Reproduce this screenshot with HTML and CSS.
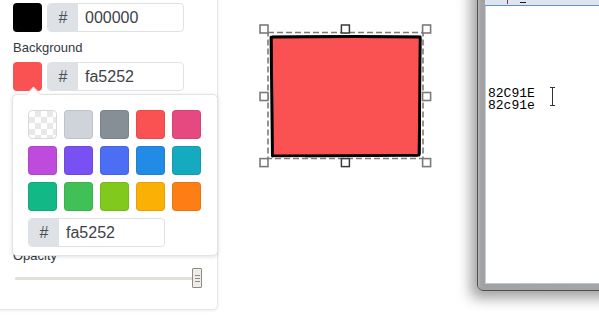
FILE: index.html
```html
<!DOCTYPE html>
<html>
<head>
<meta charset="utf-8">
<link rel="stylesheet" href="styles.css">
</head>
<body>
<aside class="panel">
  <div class="row">
    <span class="swatch sw-black"></span>
    <div class="hex"><span class="hash">#</span><span class="val">000000</span></div>
  </div>
  <div class="label">Background</div>
  <div class="row bg-row">
    <span class="swatch sw-red"></span>
    <div class="hex"><span class="hash">#</span><span class="val">fa5252</span></div>
    <div class="popover">
      <div class="grid">
        <span class="cell c-transparent"></span>
        <span class="cell c-gray1"></span>
        <span class="cell c-gray2"></span>
        <span class="cell c-red"></span>
        <span class="cell c-pink"></span>
        <span class="cell c-grape"></span>
        <span class="cell c-violet"></span>
        <span class="cell c-indigo"></span>
        <span class="cell c-blue"></span>
        <span class="cell c-cyan"></span>
        <span class="cell c-teal"></span>
        <span class="cell c-green"></span>
        <span class="cell c-lime"></span>
        <span class="cell c-yellow"></span>
        <span class="cell c-orange"></span>
      </div>
      <div class="hex pop-hex"><span class="hash">#</span><span class="val">fa5252</span></div>
    </div>
  </div>
  <div class="label opacity">Opacity</div>
  <div class="slider">
    <div class="track"></div>
    <div class="thumb"><i></i><i></i><i></i></div>
  </div>
</aside>

<svg class="canvas" width="190" height="160" viewBox="250 15 190 160" xmlns="http://www.w3.org/2000/svg">
  <path d="M271.5 37 L420 36.8 L419.2 155 L272 156 Z" fill="#fa5252"/>
  <path d="M271 37.2 C320 36.4 370 36.2 420.2 37 C419.6 76 419.8 116 419 155.2 C370 155.8 320 156 272.4 156 C271.8 116 271.6 76 271 37.2 Z" fill="none" stroke="#000" stroke-width="2.8" stroke-linejoin="round"/>
  <path d="M272.2 36.2 C322 35.8 372 36.6 419.2 36.4 M420.8 38 C420.2 80 420.6 120 420.2 154.6 M418 156.2 C370 154.4 322 155.2 273 157 M272.8 155 C273 116 272.4 78 272 38" fill="none" stroke="#000" stroke-width="1.3" opacity="0.85"/>
  <path d="M273 157.6 C285 157.8 295 157.6 305 157.4" fill="none" stroke="#e9e9e9" stroke-width="1"/>
  <rect x="268" y="32.5" width="155" height="126" fill="none" stroke="#7b7b7b" stroke-width="1.6" stroke-dasharray="6 3"/>
  <g fill="#fff" stroke="#7b7b7b" stroke-width="1.6">
    <rect x="260" y="25" width="8" height="8"/>
    <rect x="422.6" y="25" width="8" height="8"/>
    <rect x="260" y="92.5" width="8" height="8"/>
    <rect x="422.6" y="92.5" width="8" height="8"/>
    <rect x="260" y="158.6" width="8" height="8"/>
    <rect x="422.6" y="158.6" width="8" height="8"/>
  </g>
  <g fill="#fff" stroke="#3a3a3a" stroke-width="1.5">
    <rect x="341.4" y="25" width="8" height="8"/>
    <rect x="341.4" y="158.6" width="8" height="8"/>
  </g>
</svg>

<div class="window">
  <div class="menubar">
    <span class="mk mk-a"></span>
    <span class="mk mk-b"></span>
  </div>
  <div class="edit">
    <pre class="text">82C91E
82c91e</pre>
    <svg class="ibeam" width="7" height="19" viewBox="0 0 7 19" xmlns="http://www.w3.org/2000/svg">
      <path d="M1 0.5 H6 M1 18.5 H6 M3.5 0.5 V18.5" stroke="#333" stroke-width="1" fill="none"/>
    </svg>
  </div>
</div>
</body>
</html>
```

FILE: styles.css
```css
html, body {
  margin: 0;
  padding: 0;
  background: #fff;
  overflow: hidden;
  width: 599px;
  height: 321px;
}

body {
  font-family: "Liberation Sans", Arial, sans-serif;
  position: relative;
}

.panel {
  box-sizing: border-box;
  width: 228px;
  height: 330px;
  margin: -20px 0 0 -10px;
  padding: 22px 0 0 22px;
  border: 1px solid #e6e6e6;
  border-radius: 5px;
  background: #fff;
  box-shadow: 0 1px 3px rgba(0, 0, 0, 0.07);
}

.row {
  display: flex;
  gap: 5px;
  height: 29px;
}

.bg-row {
  position: relative;
  margin-top: 6px;
}

.swatch {
  width: 29px;
  height: 29px;
  border-radius: 4px;
  flex: none;
}

.sw-black { background: #000; }
.sw-red { background: #fa5252; }

.hex {
  box-sizing: border-box;
  display: flex;
  width: 137px;
  height: 29px;
  border: 1px solid #dee2e6;
  border-radius: 4px;
  overflow: hidden;
  background: #fff;
  font-size: 16px;
  line-height: 27px;
}

.hash {
  width: 30px;
  flex: none;
  text-align: center;
  background: #dee2e6;
  color: #495057;
}

.val {
  padding-left: 7px;
  color: #3d4248;
}

.label {
  margin-top: 8px;
  font-size: 13px;
  line-height: 16px;
  color: #343a40;
}

.label.opacity {
  margin-top: 157px;
}

.popover {
  position: absolute;
  top: 32px;
  left: -1px;
  box-sizing: border-box;
  width: 206px;
  padding: 15px 15px 8px 15px;
  background: #fff;
  border: 1px solid #e3e3e3;
  border-radius: 5px;
  box-shadow: 0 1px 4px rgba(0, 0, 0, 0.12);
  z-index: 2;
}

.popover::before {
  content: "";
  position: absolute;
  top: -6px;
  left: 15px;
  width: 10px;
  height: 10px;
  background: #fff;
  border-top: 1px solid #e3e3e3;
  border-left: 1px solid #e3e3e3;
  transform: rotate(45deg);
}

.grid {
  display: grid;
  grid-template-columns: repeat(5, 29px);
  gap: 7px;
}

.cell {
  box-sizing: border-box;
  width: 29px;
  height: 29px;
  border-radius: 4px;
  border: 1px solid rgba(0, 0, 0, 0.08);
}

.c-transparent {
  background: repeating-conic-gradient(#e8e8e8 0 25%, #fff 0 50%) 0 0 / 12px 12px;
  border-color: #d9d9d9;
}
.c-gray1 { background: #ced4da; }
.c-gray2 { background: #868e96; }
.c-red { background: #fa5252; }
.c-pink { background: #e64980; }
.c-grape { background: #be4bdb; }
.c-violet { background: #7950f2; }
.c-indigo { background: #4c6ef5; }
.c-blue { background: #228be6; }
.c-cyan { background: #15aabf; }
.c-teal { background: #12b886; }
.c-green { background: #40c057; }
.c-lime { background: #82c91e; }
.c-yellow { background: #fab005; }
.c-orange { background: #fd7e14; }

.pop-hex {
  margin-top: 7px;
}

.slider {
  display: flex;
  align-items: center;
  width: 187px;
  height: 20px;
  margin: 4px 0 0 2px;
}

.track {
  flex: 1;
  height: 3px;
  margin-right: -5px;
  background: #e3dfd9;
  border-radius: 1px;
}

.thumb {
  position: relative;
  flex: none;
  box-sizing: border-box;
  width: 10px;
  height: 20px;
  background: #efece8;
  border: 1px solid #8e8a85;
  border-radius: 1px;
  display: flex;
  flex-direction: column;
  justify-content: center;
  align-items: center;
  gap: 2px;
}

.thumb i {
  display: block;
  width: 5px;
  height: 1px;
  background: #8e8a85;
}

.canvas {
  position: absolute;
  left: 250px;
  top: 15px;
}

.window {
  position: absolute;
  left: 477px;
  top: -20px;
  box-sizing: border-box;
  width: 150px;
  height: 311px;
  border: 1px solid #4f4f4f;
  border-radius: 6px;
  background: linear-gradient(90deg, #b8b8b8 0, #a2a2a2 3px, #a6a6a6 100%);
  padding: 0 0 6px 7px;
  display: flex;
  flex-direction: column;
  box-shadow: -6px 7px 14px rgba(0, 0, 0, 0.38);
}

.menubar {
  height: 24px;
  flex: none;
  background: #dfe5ee;
  border-bottom: 1px solid #5f93c7;
  display: flex;
  align-items: flex-end;
}

.mk { display: block; }

.mk-a {
  width: 1px;
  height: 5px;
  margin: 0 0 1px 22px;
  background: #8a2f5a;
}

.mk-b {
  width: 6px;
  height: 1px;
  margin: 0 0 2px 12px;
  background: #1a1a1a;
}

.edit {
  position: relative;
  flex: 1;
  background: #fff;
  border-left: 1px solid #c4d0de;
  border-bottom: 1px solid #b9c8d9;
}

.text {
  margin: 0;
  padding: 82px 0 0 2px;
  font-family: "Liberation Mono", "DejaVu Sans Mono", monospace;
  font-size: 13px;
  line-height: 11.5px;
  color: #000;
}

.ibeam {
  position: absolute;
  left: 63px;
  top: 81px;
}
```
